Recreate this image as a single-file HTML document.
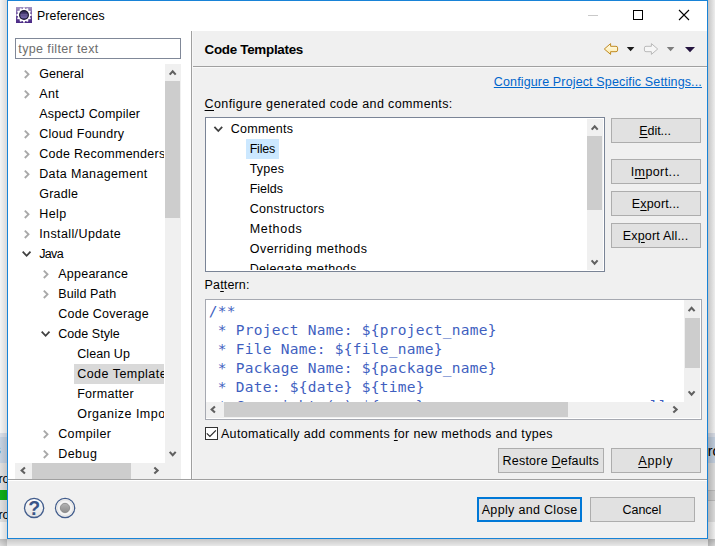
<!DOCTYPE html>
<html><head><meta charset="utf-8"><title>Preferences</title>
<style>
html,body{margin:0;padding:0;}
body{width:715px;height:546px;overflow:hidden;position:relative;background:#fff;font-family:"Liberation Sans", sans-serif;font-size:12.5px;color:#000;}
.a{position:absolute;}
.t{position:absolute;white-space:pre;line-height:20px;height:20px;}
u{text-decoration:underline;text-underline-offset:1.5px;text-decoration-thickness:1px;}
.btn{position:absolute;box-sizing:border-box;background:#e1e1e1;border:1px solid #adadad;height:25px;}
.sb{position:absolute;background:#f0f0f0;}
.th{position:absolute;background:#cdcdcd;}
.code{position:absolute;left:210px;top:301px;font-family:"DejaVu Sans Mono","Liberation Mono",monospace;font-size:14.5px;letter-spacing:0.27px;line-height:19px;color:#3f5fbf;white-space:pre;}
</style></head><body>
<!-- desktop backdrop strips -->
<div class="a" style="left:0;top:0;width:715px;height:546px;background:#fff"></div>
<div class="a" style="left:0;top:433px;width:715px;height:30px;background:#cddaea"></div>
<div class="a" style="left:0;top:433px;width:715px;height:3.5px;background:#e2e7f1"></div>
<div class="a" style="left:0;top:463px;width:715px;height:59px;background:#e9e9e9"></div>
<div class="a" style="left:0;top:490px;width:8px;height:10px;background:#10b41a"></div>
<div class="a" style="left:700px;top:490px;width:15px;height:11px;background:#dadada;border-top:1px solid #c4c4c4;border-bottom:1px solid #c4c4c4;box-sizing:border-box"></div>
<span class="t" style="left:-5.6px;top:439.5px;color:#2a62c9;">s</span>
<span class="t" style="left:-1.6px;top:468.6px;">ro</span>
<span class="t" style="left:-1.6px;top:504.8px;">ro</span>
<span class="t" style="left:707.8px;top:441.1px;font-size:14.3px;">ro</span>
<!-- shadow -->
<div class="a" style="left:0;top:0;width:7px;height:546px;background:linear-gradient(to right,rgba(0,0,0,0.04),rgba(0,0,0,0.15))"></div>
<div class="a" style="left:708px;top:0;width:7px;height:546px;background:linear-gradient(to left,rgba(0,0,0,0.07),rgba(0,0,0,0.23))"></div>
<div class="a" style="left:0;top:539px;width:715px;height:7px;background:linear-gradient(to bottom,rgba(0,0,0,0.22),rgba(0,0,0,0.09))"></div>
<!-- window -->
<div class="a" style="left:7px;top:0;width:701px;height:539px;box-sizing:border-box;border:1px solid #1883d7;background:#f0f0f0"></div>
<div class="a" style="left:8px;top:1px;width:699px;height:30px;background:#fff"></div>
<!-- left pane -->
<div class="a" style="left:8px;top:31px;width:183px;height:448px;background:#fff"></div>
<div class="a" style="left:191px;top:31px;width:1px;height:448px;background:#a0a0a0"></div>
<div class="a" style="left:192px;top:66px;width:515px;height:1px;background:#a0a0a0"></div>
<div class="a" style="left:8px;top:479px;width:699px;height:1px;background:#a0a0a0"></div>
<div class="a" style="left:8px;top:480px;width:699px;height:1px;background:#ffffff"></div>
<div class="a" style="left:192px;top:31px;width:1px;height:448px;background:#f7f7f7"></div>
<div class="a" style="left:192px;top:67px;width:515px;height:1px;background:#fafafa"></div>
<!-- filter box -->
<div class="a" style="left:15px;top:38px;width:166px;height:21px;box-sizing:border-box;border:1px solid #808898;background:#fff"></div>
<!-- left tree selection -->
<div class="a" style="left:73.5px;top:364px;width:90.5px;height:19.7px;background:#d9d9d9"></div>
<div class="a" id="lt" style="left:0;top:0;width:164px;height:463px;overflow:hidden">
<span class="t" style="left:39.20px;top:64.07px;letter-spacing:0.019px;">General</span>
<span class="t" style="left:39.20px;top:84.07px;letter-spacing:0.367px;">Ant</span>
<span class="t" style="left:39.20px;top:104.07px;letter-spacing:0.190px;">AspectJ Compiler</span>
<span class="t" style="left:39.20px;top:124.07px;letter-spacing:0.242px;">Cloud Foundry</span>
<span class="t" style="left:39.20px;top:144.07px;letter-spacing:0.280px;">Code Recommenders</span>
<span class="t" style="left:39.20px;top:164.07px;letter-spacing:0.375px;">Data Management</span>
<span class="t" style="left:39.20px;top:184.07px;letter-spacing:0.254px;">Gradle</span>
<span class="t" style="left:39.20px;top:204.07px;letter-spacing:0.427px;">Help</span>
<span class="t" style="left:39.20px;top:224.07px;letter-spacing:0.397px;">Install/Update</span>
<span class="t" style="left:39.20px;top:244.07px;letter-spacing:-0.635px;">Java</span>
<span class="t" style="left:58.20px;top:264.07px;letter-spacing:0.253px;">Appearance</span>
<span class="t" style="left:58.20px;top:284.07px;letter-spacing:0.102px;">Build Path</span>
<span class="t" style="left:58.20px;top:304.07px;letter-spacing:0.253px;">Code Coverage</span>
<span class="t" style="left:58.20px;top:324.07px;letter-spacing:0.049px;">Code Style</span>
<span class="t" style="left:77.20px;top:344.07px;letter-spacing:0.082px;">Clean Up</span>
<span class="t" style="left:77.20px;top:364.07px;letter-spacing:0.470px;">Code Templates</span>
<span class="t" style="left:77.20px;top:384.07px;letter-spacing:0.289px;">Formatter</span>
<span class="t" style="left:77.20px;top:404.07px;letter-spacing:0.500px;">Organize Imports</span>
<span class="t" style="left:58.20px;top:424.07px;letter-spacing:0.398px;">Compiler</span>
<span class="t" style="left:58.20px;top:444.07px;letter-spacing:0.464px;">Debug</span>
</div>
<!-- left tree scrollbars -->
<div class="sb" style="left:165px;top:64px;width:16px;height:415px"></div>
<div class="th" style="left:165px;top:81px;width:15px;height:137px"></div>
<div class="sb" style="left:15px;top:463px;width:150px;height:16px"></div>
<div class="th" style="left:32px;top:463px;width:99px;height:15.5px"></div>
<!-- center tree box -->
<div class="a" style="left:205px;top:117px;width:400px;height:155px;box-sizing:border-box;border:1px solid #7a8496;background:#fff"></div>
<div class="a" style="left:246px;top:139px;width:33px;height:20px;background:#cce8ff"></div>
<div class="a" id="ct" style="left:206px;top:118px;width:380px;height:152px;overflow:hidden"><div class="a" style="left:-206px;top:-118px">
<span class="t" style="left:230.80px;top:119.17px;letter-spacing:0.252px;">Comments</span>
<span class="t" style="left:249.70px;top:139.17px;letter-spacing:-0.202px;">Files</span>
<span class="t" style="left:249.70px;top:159.17px;letter-spacing:0.210px;">Types</span>
<span class="t" style="left:249.70px;top:179.17px;letter-spacing:-0.029px;">Fields</span>
<span class="t" style="left:249.70px;top:199.17px;letter-spacing:0.331px;">Constructors</span>
<span class="t" style="left:249.70px;top:219.17px;letter-spacing:0.691px;">Methods</span>
<span class="t" style="left:249.70px;top:239.17px;letter-spacing:0.484px;">Overriding methods</span>
<span class="t" style="left:249.70px;top:259.17px;letter-spacing:0.350px;">Delegate methods</span>
</div></div>
<div class="sb" style="left:587px;top:119px;width:16px;height:151px"></div>
<div class="th" style="left:587px;top:136px;width:15px;height:74px"></div>
<!-- pattern box -->
<div class="a" style="left:205px;top:299px;width:497px;height:121px;box-sizing:border-box;border:1px solid #a6a9b1;background:#fff"></div>
<div class="a" style="left:206px;top:300px;width:478px;height:101.5px;overflow:hidden"><div class="code" style="left:2.7px;top:1.8px">/**
 * Project Name: ${project_name}
 * File Name: ${file_name}
 * Package Name: ${package_name}
 * Date: ${date} ${time}
 * Copyright (c) ${year}                         ll</div></div>
<div class="sb" style="left:684px;top:300px;width:16px;height:118px"></div>
<div class="th" style="left:684.5px;top:318px;width:15px;height:49.5px"></div>
<div class="sb" style="left:206px;top:401.6px;width:478px;height:16.4px"></div>
<div class="th" style="left:224px;top:401.5px;width:344px;height:15.5px"></div>
<!-- checkbox -->
<div class="a" style="left:205px;top:427px;width:13px;height:13px;box-sizing:border-box;border:1px solid #333;background:#fff"></div>
<!-- buttons -->
<div class="btn" style="left:611px;top:118px;width:90px"></div>
<div class="btn" style="left:611px;top:159px;width:90px"></div>
<div class="btn" style="left:611px;top:191px;width:90px"></div>
<div class="btn" style="left:611px;top:223px;width:90px"></div>
<div class="btn" style="left:498px;top:448px;width:106px"></div>
<div class="btn" style="left:611px;top:448px;width:90px"></div>
<div class="btn" style="left:477px;top:497px;width:105px;border:2px solid #0078d7"></div>
<div class="btn" style="left:590px;top:497px;width:105px"></div>
<span class="t" style="left:37.00px;top:6.04px;letter-spacing:0.139px;font-size:12.3px;">Preferences</span>
<span class="t" style="left:18.30px;top:38.97px;letter-spacing:0.377px;color:#6d6d6d;">type filter text</span>
<span class="t" style="left:204.50px;top:40.06px;letter-spacing:-0.280px;font-size:13.4px;font-weight:700;">Code Templates</span>
<span class="t" style="left:493.80px;top:72.07px;letter-spacing:0.139px;color:#0066cc;text-decoration:underline;">Configure Project Specific Settings...</span>
<span class="t" style="left:204.60px;top:94.17px;letter-spacing:0.384px;"><u>C</u>onfigure generated code and comments:</span>
<span class="t" style="left:204.60px;top:275.17px;letter-spacing:0.146px;">Pa<u>t</u>tern:</span>
<span class="t" style="left:220.90px;top:423.57px;letter-spacing:0.360px;">Automatically add comments <u>f</u>or new methods and types</span>
<span class="t" style="left:639.30px;top:120.87px;letter-spacing:-0.061px;"><u>E</u>dit...</span>
<span class="t" style="left:630.70px;top:161.87px;letter-spacing:0.407px;">I<u>m</u>port...</span>
<span class="t" style="left:631.80px;top:193.87px;letter-spacing:0.144px;">E<u>x</u>port...</span>
<span class="t" style="left:622.70px;top:225.87px;letter-spacing:0.189px;">Ex<u>p</u>ort All...</span>
<span class="t" style="left:502.60px;top:450.87px;letter-spacing:0.206px;">Restore <u>D</u>efaults</span>
<span class="t" style="left:638.30px;top:450.87px;letter-spacing:0.730px;"><u>A</u>pply</span>
<span class="t" style="left:481.70px;top:499.97px;letter-spacing:0.326px;">Apply and Close</span>
<span class="t" style="left:622.50px;top:499.97px;letter-spacing:-0.044px;">Cancel</span>
<svg class="a" style="left:0;top:0" width="715" height="546" viewBox="0 0 715 546">
<path d="M24.8,70.6 L28.5,74.3 L24.8,78.0" fill="none" stroke="#a9a9a9" stroke-width="1.9"/>
<path d="M24.8,90.6 L28.5,94.3 L24.8,98.0" fill="none" stroke="#a9a9a9" stroke-width="1.9"/>
<path d="M24.8,130.60000000000002 L28.5,134.3 L24.8,138.0" fill="none" stroke="#a9a9a9" stroke-width="1.9"/>
<path d="M24.8,150.60000000000002 L28.5,154.3 L24.8,158.0" fill="none" stroke="#a9a9a9" stroke-width="1.9"/>
<path d="M24.8,170.60000000000002 L28.5,174.3 L24.8,178.0" fill="none" stroke="#a9a9a9" stroke-width="1.9"/>
<path d="M24.8,210.60000000000002 L28.5,214.3 L24.8,218.0" fill="none" stroke="#a9a9a9" stroke-width="1.9"/>
<path d="M24.8,230.60000000000002 L28.5,234.3 L24.8,238.0" fill="none" stroke="#a9a9a9" stroke-width="1.9"/>
<path d="M22.700000000000003,251.70000000000002 L26.6,255.8 L30.5,251.70000000000002" fill="none" stroke="#404040" stroke-width="1.8"/>
<path d="M43.8,270.6 L47.5,274.3 L43.8,278.0" fill="none" stroke="#a9a9a9" stroke-width="1.9"/>
<path d="M43.8,290.6 L47.5,294.3 L43.8,298.0" fill="none" stroke="#a9a9a9" stroke-width="1.9"/>
<path d="M41.7,331.7 L45.6,335.8 L49.5,331.7" fill="none" stroke="#404040" stroke-width="1.8"/>
<path d="M43.8,430.6 L47.5,434.3 L43.8,438.0" fill="none" stroke="#a9a9a9" stroke-width="1.9"/>
<path d="M43.8,450.6 L47.5,454.3 L43.8,458.0" fill="none" stroke="#a9a9a9" stroke-width="1.9"/>
<path d="M214.4,126.9 L218.3,131.0 L222.20000000000002,126.9" fill="none" stroke="#404040" stroke-width="1.8"/>
<path d="M169.7,74.65 L172.7,71.35 L175.7,74.65" fill="none" stroke="#606060" stroke-width="2.1"/>
<path d="M169.7,451.85 L172.7,455.15 L175.7,451.85" fill="none" stroke="#606060" stroke-width="2.1"/>
<path d="M24.95,467.5 L21.650000000000002,470.5 L24.95,473.5" fill="none" stroke="#606060" stroke-width="2.1"/>
<path d="M154.35,467.5 L157.65,470.5 L154.35,473.5" fill="none" stroke="#606060" stroke-width="2.1"/>
<path d="M591.7,129.65 L594.7,126.35 L597.7,129.65" fill="none" stroke="#606060" stroke-width="2.1"/>
<path d="M591.6,260.35 L594.6,263.65 L597.6,260.35" fill="none" stroke="#606060" stroke-width="2.1"/>
<path d="M688.6,311.15 L691.6,307.85 L694.6,311.15" fill="none" stroke="#606060" stroke-width="2.1"/>
<path d="M688.6,391.35 L691.6,394.65 L694.6,391.35" fill="none" stroke="#606060" stroke-width="2.1"/>
<path d="M214.95000000000002,406.5 L211.65,409.5 L214.95000000000002,412.5" fill="none" stroke="#606060" stroke-width="2.1"/>
<path d="M673.35,406.5 L676.65,409.5 L673.35,412.5" fill="none" stroke="#606060" stroke-width="2.1"/>
<defs><linearGradient id="gp" x1="0" y1="0" x2="0" y2="1"><stop offset="0" stop-color="#a596c4"/><stop offset="0.5" stop-color="#6a4f9c"/><stop offset="1" stop-color="#4a2885"/></linearGradient>
<linearGradient id="gs" x1="0" y1="0" x2="0" y2="1"><stop offset="0" stop-color="#2e2650"/><stop offset="0.35" stop-color="#4a3f78"/><stop offset="0.5" stop-color="#7d72a8"/><stop offset="0.62" stop-color="#4a3a80"/><stop offset="0.75" stop-color="#8076b0"/><stop offset="1" stop-color="#4a3a88"/></linearGradient></defs>
<rect x="16" y="7" width="16" height="16" fill="url(#gp)"/>
<rect x="23.05" y="7.5" width="1.9" height="3" fill="#fff" transform="rotate(0 24 15)"/><rect x="23.05" y="7.5" width="1.9" height="3" fill="#fff" transform="rotate(30 24 15)"/><rect x="23.05" y="7.5" width="1.9" height="3" fill="#fff" transform="rotate(60 24 15)"/><rect x="23.05" y="7.5" width="1.9" height="3" fill="#fff" transform="rotate(90 24 15)"/><rect x="23.05" y="7.5" width="1.9" height="3" fill="#fff" transform="rotate(120 24 15)"/><rect x="23.05" y="7.5" width="1.9" height="3" fill="#fff" transform="rotate(150 24 15)"/><rect x="23.05" y="7.5" width="1.9" height="3" fill="#fff" transform="rotate(180 24 15)"/><rect x="23.05" y="7.5" width="1.9" height="3" fill="#fff" transform="rotate(210 24 15)"/><rect x="23.05" y="7.5" width="1.9" height="3" fill="#fff" transform="rotate(240 24 15)"/><rect x="23.05" y="7.5" width="1.9" height="3" fill="#fff" transform="rotate(270 24 15)"/><rect x="23.05" y="7.5" width="1.9" height="3" fill="#fff" transform="rotate(300 24 15)"/><rect x="23.05" y="7.5" width="1.9" height="3" fill="#fff" transform="rotate(330 24 15)"/>
<circle cx="24" cy="15" r="6.3" fill="#fff"/>
<circle cx="24" cy="15" r="5.0" fill="#1b1930"/>
<circle cx="24" cy="15" r="3.8" fill="url(#gs)"/>
<path d="M588,15.5 H598" stroke="#c9c9c9" stroke-width="1"/>
<rect x="633.5" y="10.5" width="9" height="9" fill="none" stroke="#000" stroke-width="1"/>
<path d="M679,10 L689,20 M689,10 L679,20" stroke="#000" stroke-width="1.1" fill="none"/>
<defs><linearGradient id="ay" x1="0" y1="0" x2="0" y2="1"><stop offset="0" stop-color="#fffdf0"/><stop offset="1" stop-color="#fde9a4"/></linearGradient></defs>
<path d="M604.3,49 L610.6,43.6 L610.6,46.3 L616,46.3 Q617.6,46.3 617.6,47.9 L617.6,50.1 Q617.6,51.7 616,51.7 L610.6,51.7 L610.6,54.4 Z" fill="url(#ay)" stroke="#c08a22" stroke-width="1" stroke-linejoin="round"/>
<path d="M626.8,47 L634.4,47 L630.6,51.2 Z" fill="#1a1a1a"/>
<path d="M657.7,49 L651.4,43.6 L651.4,46.3 L646,46.3 Q644.4,46.3 644.4,47.9 L644.4,50.1 Q644.4,51.7 646,51.7 L651.4,51.7 L651.4,54.4 Z" fill="#f6f6f6" stroke="#b9b9b9" stroke-width="1" stroke-linejoin="round"/>
<path d="M666.8,47 L674.4,47 L670.6,51.2 Z" fill="#7d7d7d"/>
<path d="M685,47 L695,47 L690,52.2 Z" fill="#24143f"/>
<defs><linearGradient id="hg" x1="0" y1="0" x2="0" y2="1"><stop offset="0" stop-color="#ffffff"/><stop offset="1" stop-color="#e2e2e2"/></linearGradient>
<linearGradient id="rg" x1="0" y1="0" x2="0" y2="1"><stop offset="0" stop-color="#b4b4b4"/><stop offset="1" stop-color="#8c8c8c"/></linearGradient></defs>
<circle cx="34.1" cy="507.9" r="9.6" fill="url(#hg)" stroke="#415c8c" stroke-width="1.3"/>
<text x="34.1" y="514.6" text-anchor="middle" font-family="Liberation Sans, sans-serif" font-weight="700" font-size="19.5" fill="#3b5688">?</text>
<circle cx="65.1" cy="507.9" r="9.6" fill="#f4f4f4" stroke="#415c8c" stroke-width="1.3"/>
<circle cx="65.1" cy="507.9" r="8" fill="none" stroke="#e6e6e6" stroke-width="1.6"/>
<circle cx="65" cy="508" r="4.7" fill="url(#rg)" stroke="#858585" stroke-width="0.8"/>
<path d="M206.8,433.4 L209.9,436.4 L215.9,430.4" fill="none" stroke="#2b2b2b" stroke-width="1.25"/>
</svg>
</body></html>
